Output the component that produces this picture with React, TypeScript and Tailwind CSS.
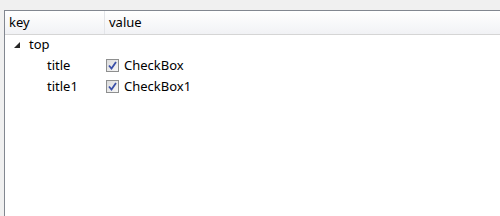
type Row = { key: string; value: string };

const rows: Row[] = [
  { key: 'title', value: 'CheckBox' },
  { key: 'title1', value: 'CheckBox1' },
];

function CheckMark() {
  return (
    <span className="w-[13px] h-[13px] border border-[#8e8f8f] bg-gradient-to-br from-[#dcdcdc] to-[#f7f7f7] flex items-center justify-center shrink-0">
      <svg width="9" height="9" viewBox="0 0 9 9">
        <path d="M1 4.5 L3.5 7.5 L8 1" fill="none" stroke="#3a4fa8" strokeWidth="1.8" />
      </svg>
    </span>
  );
}

export default function App() {
  return (
    <div
      className="w-[500px] h-[216px] bg-[#f0f0f0] pt-[10px] pl-[4px] overflow-hidden text-[13px] text-black"
      style={{ fontFamily: "'Noto Sans', 'Segoe UI', sans-serif" }}
    >
      <div className="h-full bg-white border-t border-l border-[#828790] flex flex-col">
        <div className="h-[24px] flex items-center bg-gradient-to-b from-[#ffffff] to-[#f1f2f5] border-b border-[#d5d5d5] leading-none">
          <div className="w-[100px] pl-[4px] border-r border-[#e3e5e9] h-full flex items-center">key</div>
          <div className="pl-[4px]">value</div>
        </div>
        <div className="-mt-[1px]">
          <div className="h-[21px] flex items-center">
            <svg width="6" height="6" viewBox="0 0 6 6" className="ml-[9px] mr-[9px]">
              <path d="M6 0 L6 6 L0 6 Z" fill="#262626" />
            </svg>
            <span>top</span>
          </div>
          {rows.map((r) => (
            <div key={r.key} className="h-[21px] flex items-center">
              <div className="w-[101px] pl-[42px]">{r.key}</div>
              <CheckMark />
              <span className="ml-[5px]">{r.value}</span>
            </div>
          ))}
        </div>
      </div>
    </div>
  );
}
